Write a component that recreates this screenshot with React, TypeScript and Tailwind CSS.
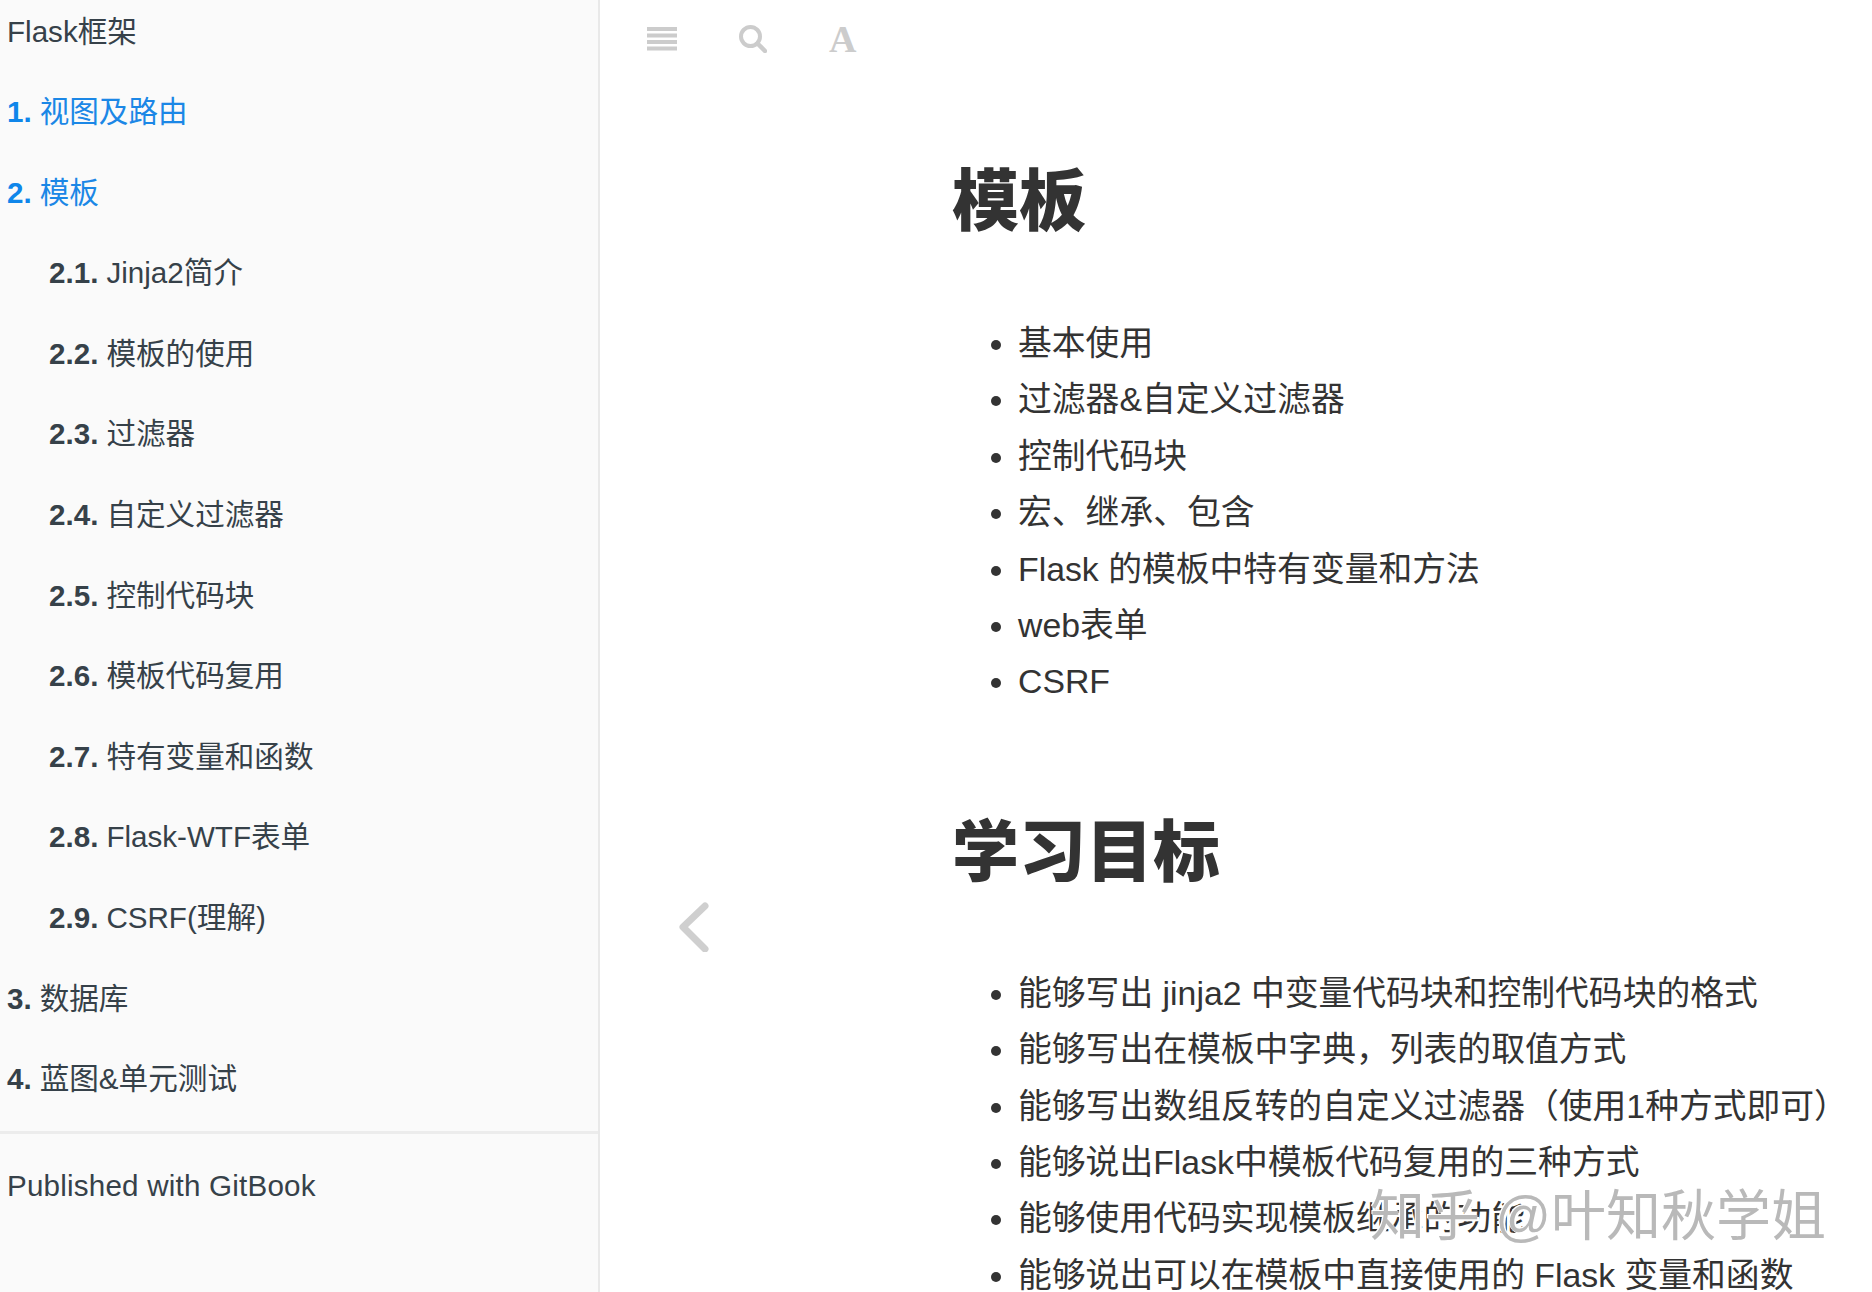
const FONT = "font-['Liberation_Sans','Noto_Sans_CJK_SC',sans-serif]";

const nav: { n: string; t: string; sub?: boolean; active?: boolean }[] = [
  { n: "1.", t: "视图及路由", active: true },
  { n: "2.", t: "模板", active: true },
  { n: "2.1.", t: "Jinja2简介", sub: true },
  { n: "2.2.", t: "模板的使用", sub: true },
  { n: "2.3.", t: "过滤器", sub: true },
  { n: "2.4.", t: "自定义过滤器", sub: true },
  { n: "2.5.", t: "控制代码块", sub: true },
  { n: "2.6.", t: "模板代码复用", sub: true },
  { n: "2.7.", t: "特有变量和函数", sub: true },
  { n: "2.8.", t: "Flask-WTF表单", sub: true },
  { n: "2.9.", t: "CSRF(理解)", sub: true },
  { n: "3.", t: "数据库" },
  { n: "4.", t: "蓝图&单元测试" },
];

const list1 = ["基本使用", "过滤器&自定义过滤器", "控制代码块", "宏、继承、包含", "Flask 的模板中特有变量和方法", "web表单", "CSRF"];
const list2 = [
  "能够写出 jinja2 中变量代码块和控制代码块的格式",
  "能够写出在模板中字典，列表的取值方式",
  "能够写出数组反转的自定义过滤器（使用1种方式即可）",
  "能够说出Flask中模板代码复用的三种方式",
  "能够使用代码实现模板继承的功能",
  "能够说出可以在模板中直接使用的 Flask 变量和函数",
];

function Bullets({ items }: { items: string[] }) {
  return (
    <ul className="list-disc pl-[66px] text-[33.8px] leading-[56.4px] text-[#333333] whitespace-nowrap">
      {items.map((i) => (
        <li key={i}>{i}</li>
      ))}
    </ul>
  );
}

export default function App() {
  return (
    <div className={`flex h-[1292px] w-[1872px] overflow-hidden bg-white ${FONT}`}>
      <aside className="w-[600px] shrink-0 border-r-[2px] border-[#e9e9e9] bg-[#fafafa] text-[29.6px] text-[#364149]">
        <div className="flex h-[72px] items-center pb-[8px] pl-[7px]">Flask框架</div>
        {nav.map((r) => (
          <div
            key={r.n}
            className={`flex h-[80.6px] items-center ${r.sub ? "pl-[49px]" : "pl-[7px]"} ${r.active ? "text-[#1b87e6]" : ""}`}
          >
            <b className={r.active ? "text-[#0f86ea]" : ""}>{r.n}</b>
            <span className="ml-[8px]">{r.t}</span>
          </div>
        ))}
        <div className="mt-[11px] h-[3px] bg-[#ececec]" />
        <div className="flex h-[104px] items-center pl-[7px] tracking-[0.2px]">Published with GitBook</div>
      </aside>
      <main className="relative min-w-0 flex-1">
        <div className="flex h-[76px] items-center pl-[47px] pt-[2px] text-[#cccccc]">
          <svg width="30" height="24" viewBox="0 0 30 24" fill="currentColor" aria-hidden="true">
            <rect y="0" width="30" height="4" />
            <rect y="6.5" width="30" height="4" />
            <rect y="13" width="30" height="4" />
            <rect y="19.5" width="30" height="4" />
          </svg>
          <svg className="ml-[62px]" width="28" height="28" viewBox="0 0 28 28" fill="none" stroke="currentColor" aria-hidden="true">
            <circle cx="11.5" cy="11.5" r="9.5" strokeWidth="4" />
            <path d="M18.5 18.5L26 26" strokeWidth="4.5" strokeLinecap="round" />
          </svg>
          <span className="ml-[62px] font-['Liberation_Serif',serif] text-[38px] font-bold leading-none">A</span>
        </div>
        <div className="ml-[352px] text-[#333333]">
          <h1 className="mt-[78px] text-[67px] font-black leading-[96px]">模板</h1>
          <div className="mt-[65px]">
            <Bullets items={list1} />
          </div>
          <h1 className="mt-[95px] text-[67px] font-black leading-[96px]">学习目标</h1>
          <div className="mt-[64px]">
            <Bullets items={list2} />
          </div>
        </div>
        <svg className="absolute left-[77px] top-[902px]" width="34" height="50" viewBox="0 0 34 50" fill="none" stroke="#cfcfcf" strokeWidth="7" strokeLinecap="round" strokeLinejoin="round" aria-hidden="true">
          <path d="M28 4L6 25L28 47" />
        </svg>
        <div className="absolute left-[770px] top-[1177px] whitespace-nowrap text-[55px] leading-[78px] text-[#b9b9b9] [text-shadow:0_0_2px_#ffffff,2px_2px_0_#ffffff,-1px_-1px_0_#ffffff]">
          知乎 @叶知秋学姐
        </div>
      </main>
    </div>
  );
}
